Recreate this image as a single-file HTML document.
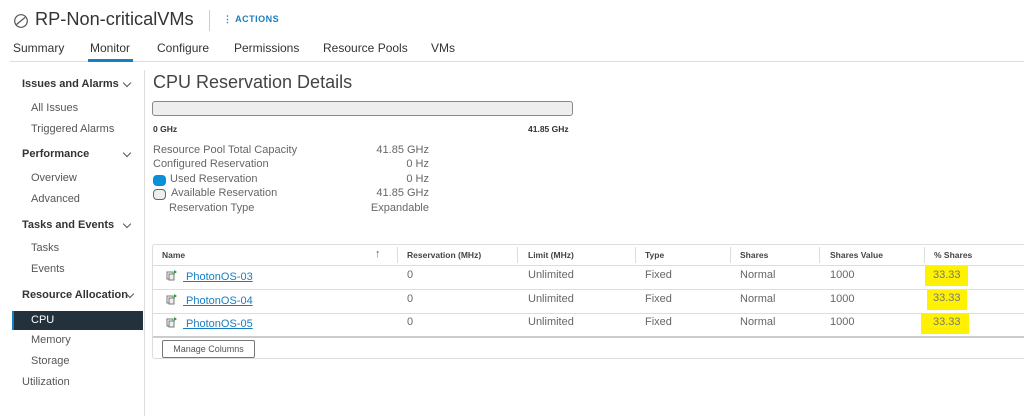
<!DOCTYPE html>
<html><head><meta charset="utf-8"><style>
*{margin:0;padding:0;box-sizing:border-box}
body{width:1024px;height:416px;overflow:hidden;background:#fff;font-family:"Liberation Sans",sans-serif;color:#565656;position:relative}
.a{position:absolute;white-space:nowrap}
.tab{top:41px;font-size:12px;color:#333}
.sh{font-size:11px;font-weight:bold;color:#333;left:22px}
.si{font-size:11px;color:#565656;left:31px}
.chev{position:absolute;left:124px;width:6px;height:6px;border-right:1.3px solid #555;border-bottom:1.3px solid #555;transform:rotate(45deg)}
.dl{font-size:11px;color:#666;left:153px}
.dv{font-size:11px;color:#666;right:595px;text-align:right}
.th{top:250px;font-size:8.5px;font-weight:bold;color:#444}
.td{font-size:11px;color:#666}
.cd{position:absolute;top:247px;width:1px;height:16px;background:#ddd}
.hl{position:absolute;background:#fff200}
.lnk{font-size:11px;color:#1a7dc0;text-decoration:underline}
</style></head><body>
<svg class="a" style="left:13px;top:13px" width="16" height="16" viewBox="0 0 16 16"><circle cx="8" cy="8" r="6.3" fill="none" stroke="#555" stroke-width="1.2"/><path d="M3.5 11.5 L12 4.5" fill="none" stroke="#555" stroke-width="1.2"/></svg>
<div class="a" style="left:35px;top:9px;font-size:18.2px;color:#333">RP-Non-criticalVMs</div>
<div class="a" style="left:209px;top:10px;width:1px;height:21px;background:#ccc"></div>
<div class="a" style="left:223px;top:14px;font-size:9px;font-weight:bold;color:#1a7dc0;letter-spacing:.5px">⋮ ACTIONS</div>
<div class="a tab" style="left:13px">Summary</div>
<div class="a tab" style="left:90px">Monitor</div>
<div class="a tab" style="left:157px">Configure</div>
<div class="a tab" style="left:234px">Permissions</div>
<div class="a tab" style="left:323px">Resource Pools</div>
<div class="a tab" style="left:431px">VMs</div>
<div class="a" style="left:10px;top:61px;width:1014px;height:1px;background:#ddd"></div>
<div class="a" style="left:88px;top:59px;width:45px;height:3px;background:#1a7dc0"></div>
<div class="a" style="left:144px;top:70px;width:1px;height:346px;background:#ddd"></div>

<div class="a sh" style="top:78px">Issues and Alarms</div><div class="chev" style="top:80px"></div>
<div class="a si" style="top:102px">All Issues</div>
<div class="a si" style="top:123px">Triggered Alarms</div>
<div class="a sh" style="top:148px">Performance</div><div class="chev" style="top:150px"></div>
<div class="a si" style="top:172px">Overview</div>
<div class="a si" style="top:193px">Advanced</div>
<div class="a sh" style="top:219px">Tasks and Events</div><div class="chev" style="top:221px"></div>
<div class="a si" style="top:242px">Tasks</div>
<div class="a si" style="top:263px">Events</div>
<div class="a sh" style="top:289px">Resource Allocation</div><div class="chev" style="top:291px;left:127px"></div>
<div class="a" style="left:12px;top:311px;width:131px;height:19px;background:#23313c;border-left:2px solid #1a7dc0"></div>
<div class="a si" style="top:314px;color:#fff">CPU</div>
<div class="a si" style="top:334px">Memory</div>
<div class="a si" style="top:355px">Storage</div>
<div class="a si" style="top:376px;left:22px">Utilization</div>

<div class="a" style="left:153px;top:72px;font-size:18px;color:#444">CPU Reservation Details</div>
<div class="a" style="left:152px;top:101px;width:421px;height:15px;border:1px solid #888;border-radius:3px;background:#eee"></div>
<div class="a" style="left:153px;top:124px;font-size:8.5px;font-weight:bold;color:#333">0 GHz</div>
<div class="a" style="left:528px;top:124px;font-size:8.5px;font-weight:bold;color:#333">41.85 GHz</div>
<div class="a dl" style="top:144px">Resource Pool Total Capacity</div><div class="a dv" style="top:144px">41.85 GHz</div>
<div class="a dl" style="top:158px">Configured Reservation</div><div class="a dv" style="top:158px">0 Hz</div>
<div class="a" style="left:153px;top:175px;width:13px;height:11px;background:#0a8fd8;border-radius:4px"></div>
<div class="a dl" style="top:173px;left:170px">Used Reservation</div><div class="a dv" style="top:173px">0 Hz</div>
<div class="a" style="left:153px;top:189px;width:13px;height:11px;background:#eee;border:1px solid #666;border-radius:4px"></div>
<div class="a dl" style="top:187px;left:171px">Available Reservation</div><div class="a dv" style="top:187px">41.85 GHz</div>
<div class="a dl" style="top:202px;left:169px">Reservation Type</div><div class="a dv" style="top:202px">Expandable</div>

<div class="a" style="left:152px;top:244px;width:880px;height:115px;border:1px solid #ddd;border-radius:3px"></div>
<div class="a" style="left:153px;top:265px;width:871px;height:1px;background:#ddd"></div>
<div class="a" style="left:153px;top:289px;width:871px;height:1px;background:#ddd"></div>
<div class="a" style="left:153px;top:313px;width:871px;height:1px;background:#ddd"></div>
<div class="a" style="left:153px;top:336px;width:871px;height:2px;background:#ccc"></div>
<div class="a th" style="left:162px">Name</div><div class="a" style="left:375px;top:248px;font-size:11px;color:#666">↑</div>
<div class="cd" style="left:397px"></div><div class="a th" style="left:407px">Reservation (MHz)</div>
<div class="cd" style="left:517px"></div><div class="a th" style="left:528px">Limit (MHz)</div>
<div class="cd" style="left:635px"></div><div class="a th" style="left:645px">Type</div>
<div class="cd" style="left:730px"></div><div class="a th" style="left:740px">Shares</div>
<div class="cd" style="left:819px"></div><div class="a th" style="left:830px">Shares Value</div>
<div class="cd" style="left:924px"></div><div class="a th" style="left:934px">% Shares</div>
<div class="hl" style="left:925px;top:266px;width:43px;height:20px"></div>
<div class="hl" style="left:927px;top:290px;width:40px;height:20px"></div>
<div class="hl" style="left:921px;top:313px;width:48px;height:21px"></div>

<svg class="a" style="left:166px;top:269px" width="12" height="12" viewBox="0 0 12 12"><rect x="1" y="3" width="6" height="7" fill="none" stroke="#777"/><rect x="3" y="5" width="5" height="6" fill="#eee" stroke="#777"/><path d="M8 1 L11 3 L8 5Z" fill="#2a9d3a"/></svg>
<svg class="a" style="left:166px;top:293px" width="12" height="12" viewBox="0 0 12 12"><rect x="1" y="3" width="6" height="7" fill="none" stroke="#777"/><rect x="3" y="5" width="5" height="6" fill="#eee" stroke="#777"/><path d="M8 1 L11 3 L8 5Z" fill="#2a9d3a"/></svg>
<svg class="a" style="left:166px;top:316px" width="12" height="12" viewBox="0 0 12 12"><rect x="1" y="3" width="6" height="7" fill="none" stroke="#777"/><rect x="3" y="5" width="5" height="6" fill="#eee" stroke="#777"/><path d="M8 1 L11 3 L8 5Z" fill="#2a9d3a"/></svg>

<div class="a lnk" style="left:183px;top:271px">&nbsp;PhotonOS-03</div>
<div class="a lnk" style="left:183px;top:295px">&nbsp;PhotonOS-04</div>
<div class="a lnk" style="left:183px;top:318px">&nbsp;PhotonOS-05</div>
<div class="a td" style="left:407px;top:269px">0</div><div class="a td" style="left:528px;top:269px">Unlimited</div><div class="a td" style="left:645px;top:269px">Fixed</div><div class="a td" style="left:740px;top:269px">Normal</div><div class="a td" style="left:830px;top:269px">1000</div><div class="a td" style="left:933px;top:269px;color:#777">33.33</div>
<div class="a td" style="left:407px;top:293px">0</div><div class="a td" style="left:528px;top:293px">Unlimited</div><div class="a td" style="left:645px;top:293px">Fixed</div><div class="a td" style="left:740px;top:293px">Normal</div><div class="a td" style="left:830px;top:293px">1000</div><div class="a td" style="left:933px;top:292px;color:#777">33.33</div>
<div class="a td" style="left:407px;top:316px">0</div><div class="a td" style="left:528px;top:316px">Unlimited</div><div class="a td" style="left:645px;top:316px">Fixed</div><div class="a td" style="left:740px;top:316px">Normal</div><div class="a td" style="left:830px;top:316px">1000</div><div class="a td" style="left:933px;top:316px;color:#777">33.33</div>
<div class="a" style="left:162px;top:340px;width:93px;height:18px;border:1px solid #777;border-radius:2px;font-size:9px;color:#555;text-align:center;line-height:16px;background:#fff">Manage Columns</div>
</body></html>
